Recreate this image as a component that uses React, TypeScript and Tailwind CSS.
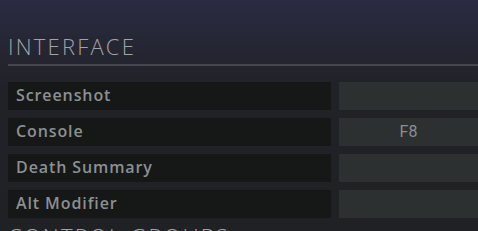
import React from "react";

const rows: { label: string; value: string }[] = [
  { label: "Screenshot", value: "" },
  { label: "Console", value: "F8" },
  { label: "Death Summary", value: "" },
  { label: "Alt Modifier", value: "" },
];

export default function App() {
  return (
    <div className="w-[478px] h-[231px] overflow-hidden bg-[linear-gradient(to_bottom,#2a2b42_0px,#24252f_60px,#212227_90px,#202125_100%)]">
      <div className="pl-2">
        <div
          className="pt-[33px] text-[22px] leading-[26px] font-light tracking-[2.2px] text-[#a0a4a8] whitespace-nowrap"
          style={{ fontFamily: '"Open Sans", "Noto Sans", sans-serif' }}
        >
          INTERFACE
        </div>
        <div className="mt-[5px] h-[2px] bg-[#45474b]" />
        <div className="mt-[16px] flex flex-col gap-2">
          {rows.map((r) => (
            <div key={r.label} className="flex gap-2 h-[28px]">
              <div
                className="w-[323px] shrink-0 bg-[#161817] pl-2 text-[16px] leading-[27px] font-semibold tracking-[0.9px] text-[#8b9093] whitespace-nowrap"
                style={{ fontFamily: '"Open Sans", "Noto Sans", sans-serif' }}
              >
                {r.label}
              </div>
              <div
                className="w-[139px] shrink-0 bg-[#2c3031] flex items-center justify-center text-[16px] leading-[28px] text-[#8a8f92]"
                style={{ fontFamily: 'Roboto, "Liberation Sans", sans-serif' }}
              >
                {r.value}
              </div>
            </div>
          ))}
        </div>
        <div
          className="mt-[5px] text-[22px] leading-[26px] font-light tracking-[2.2px] text-[#a0a4a8] whitespace-nowrap"
          style={{ fontFamily: '"Open Sans", "Noto Sans", sans-serif' }}
        >
          CONTROL GROUPS
        </div>
      </div>
    </div>
  );
}
